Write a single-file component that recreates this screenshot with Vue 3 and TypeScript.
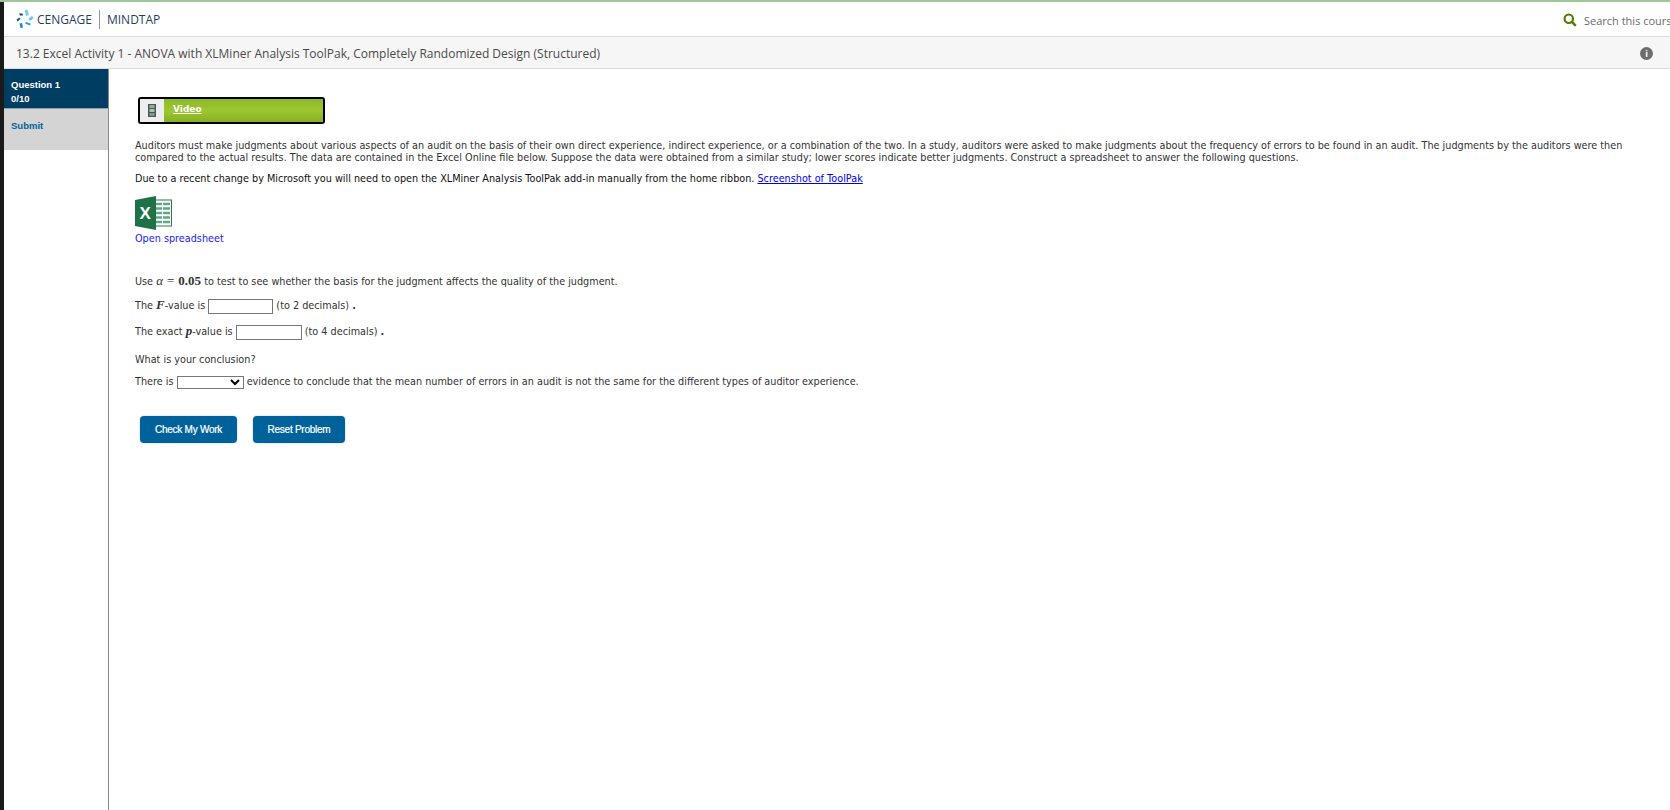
<script setup lang="ts">
import { ref } from 'vue';

const fValue = ref('');
const pValue = ref('');
const evidence = ref('');
</script>

<template>
  <div class="page">
    <div class="strip"></div>
    <div class="shell">
      <header class="top">
        <svg class="logo" width="18" height="20" viewBox="0 0 18 20">
          <path d="M8.500 1.500l3-1 1.500 5.500-3 1z" fill="#7fcdf0" />
          <path d="M12.500 9.500l3.500-2.500 1.500 2-3.500 3z" fill="#6cc3ec" />
          <path d="M9 14.500l1-1.500 4.500 1.500-.5 2z" fill="#2a9fdc" />
          <path d="M3.500 14.500l2.500-.5 1 4.500-2.500.5z" fill="#1c87c9" />
          <path d="M.5 10.500l3-2 1 1.500-3 2.500z" fill="#0f5f93" />
          <path d="M3 4.500l3.500 0 .5 2-3 0z" fill="#0d4a70" />
        </svg>
        <span class="brand">CENGAGE</span>
        <span class="brand-sep"></span>
        <span class="brand">MINDTAP</span>
        <div class="search">
          <svg width="14" height="14" viewBox="0 0 16 16">
            <circle cx="6.600" cy="6.600" r="4.800" fill="none" stroke="#4f7a00" stroke-width="2.400" />
            <path d="M10.200 10.200l4.400 4.400" stroke="#4f7a00" stroke-width="2.800" />
          </svg>
          <span>Search this course</span>
        </div>
      </header>

      <div class="title-bar">
        <span>13.2 Excel Activity 1 - ANOVA with XLMiner Analysis ToolPak, Completely Randomized Design (Structured)</span>
        <span class="info">i</span>
      </div>

      <div class="main">
        <aside class="side">
          <div class="question">Question 1<br />0/10</div>
          <div class="submit">Submit</div>
        </aside>

        <section class="content">
          <a class="video">
            <span class="video-icon">
              <svg width="8" height="13" viewBox="0 0 8 13">
                <rect width="8" height="13" fill="#4a5a50" />
                <rect x="1.500" y="1" width="5" height="3" fill="#8fb09c" />
                <rect x="1.500" y="5" width="5" height="3" fill="#a9c4b4" />
                <rect x="1.500" y="9" width="5" height="3" fill="#7d9a8a" />
              </svg>
            </span>
            <span class="video-label"><u>Video</u></span>
          </a>

          <p class="intro">
            Auditors must make judgments about various aspects of an audit on the basis of their own direct experience, indirect experience, or a combination of the two. In a study, auditors were asked to make judgments about the frequency of errors to be found in an audit. The judgments by the auditors were then compared to the actual results. The data are contained in the Excel Online file below. Suppose the data were obtained from a similar study; lower scores indicate better judgments. Construct a spreadsheet to answer the following questions.
          </p>
          <p class="notice">
            Due to a recent change by Microsoft you will need to open the XLMiner Analysis ToolPak add-in manually from the home ribbon.
            <a class="link"><u>Screenshot of ToolPak</u></a>
          </p>

          <svg class="excel" width="37" height="34" viewBox="0 0 37 34">
            <rect x="18" y="4" width="18.500" height="26" fill="#fff" stroke="#2a7d52" stroke-width="1" />
            <path d="M21 8h14M21 12.500h14M21 17h14M21 21.500h14M21 26h14" stroke="#5fa883" stroke-width="2.400" />
            <path d="M27.500 5v24" stroke="#fff" stroke-width="1" />
            <path d="M0 4L21 0v34L0 30z" fill="#1f7246" />
            <text x="4.500" y="23" class="excel-x">X</text>
          </svg>
          <a class="open">Open spreadsheet</a>

          <p class="use">
            Use <span class="math"><i>α</i><span class="eq">=</span><b>0.05</b></span> to test to see whether the basis for the judgment affects the quality of the judgment.
          </p>
          <p class="answer">
            The <span class="math"><i><b>F</b></i></span>-value is
            <input v-model="fValue" class="f-input" type="text" />
            (to 2 decimals) <b>.</b>
          </p>
          <p class="answer exact">
            The exact <span class="math"><i><b>p</b></i></span>-value is
            <input v-model="pValue" class="p-input" type="text" />
            (to 4 decimals) <b>.</b>
          </p>
          <p class="conclusion">What is your conclusion?</p>
          <p class="there">
            There is
            <select v-model="evidence" class="pick">
              <option value=""></option>
              <option value="sufficient">sufficient</option>
              <option value="insufficient">insufficient</option>
            </select>
            evidence to conclude that the mean number of errors in an audit is not the same for the different types of auditor experience.
          </p>

          <div class="actions">
            <button type="button">Check My Work</button>
            <button type="button" class="reset">Reset Problem</button>
          </div>
        </section>
      </div>
    </div>
  </div>
</template>

<style>
html,
body {
  margin: 0;
  overflow: hidden;
}
</style>

<style scoped>
.page {
  display: flex;
  width: 1670px;
  height: 810px;
  overflow: hidden;
  background: #fff;
  border-top: 2px solid #9fc79a;
  box-sizing: border-box;
}
.strip {
  width: 4px;
  flex: none;
  background: #1a1a1a;
}
.shell {
  flex: 1;
  min-width: 0;
  display: flex;
  flex-direction: column;
}
.top {
  height: 34px;
  flex: none;
  display: flex;
  align-items: center;
  padding-left: 12px;
  box-sizing: border-box;
  font-family: "Open Sans", sans-serif;
}
.logo {
  margin-right: 3px;
}
.brand {
  font-size: 12px;
  color: #1f3f5c;
}
.brand-sep {
  width: 1px;
  height: 19px;
  margin: 0 7px;
  background: #7f9bb0;
}
.search {
  margin-left: auto;
  width: 107px;
  flex: none;
  display: flex;
  align-items: center;
  gap: 7px;
  padding-top: 2px;
  overflow: hidden;
  white-space: nowrap;
  font-size: 11px;
  color: #6b6b6b;
}
.search svg {
  flex: none;
}
.title-bar {
  height: 33px;
  flex: none;
  display: flex;
  align-items: center;
  justify-content: space-between;
  padding: 1px 17px 0 12px;
  box-sizing: border-box;
  background: #f6f6f6;
  border-top: 1px solid #dcdcdc;
  border-bottom: 1px solid #dcdcdc;
  font-family: "Open Sans", sans-serif;
  font-size: 12px;
  color: #4a4a4a;
}
.info {
  width: 13px;
  height: 13px;
  border-radius: 50%;
  background: #6d6d6d;
  color: #fff;
  font-size: 9px;
  font-weight: 700;
  line-height: 13px;
  text-align: center;
}
.main {
  flex: 1;
  display: flex;
  min-height: 0;
}
.side {
  width: 105px;
  flex: none;
  border-right: 1px solid #8a8a8a;
  box-sizing: border-box;
  font-family: "Liberation Sans", sans-serif;
  font-size: 9.500px;
  font-weight: 700;
}
.question {
  height: 40px;
  padding: 9px 0 0 7px;
  box-sizing: border-box;
  background: #003d63;
  color: #fff;
  line-height: 14px;
  border-bottom: 1px solid #8fa0ac;
}
.submit {
  height: 41px;
  padding: 10px 0 0 7px;
  box-sizing: border-box;
  background: #d4d4d4;
  color: #00629b;
  line-height: 14px;
}
.content {
  flex: 1;
  min-width: 0;
  padding: 28px 30px 0 26px;
  font-family: "DejaVu Sans", Verdana, sans-serif;
  font-size: 9.680px;
  line-height: 12px;
  color: #333;
}
p {
  margin: 0;
}
.video {
  display: flex;
  width: 187px;
  height: 27px;
  margin-left: 3px;
  border: 2px solid #000;
  border-radius: 3px;
  box-sizing: border-box;
  overflow: hidden;
}
.video-icon {
  width: 24px;
  display: flex;
  align-items: center;
  justify-content: center;
  background: #eeeeee;
}
.video-label {
  flex: 1;
  padding-left: 9px;
  background: linear-gradient(#8db82a, #9cc72e 50%, #86b025);
  color: #fff;
  font-size: 9px;
  font-weight: 700;
  line-height: 21px;
}
.intro {
  margin-top: 16px;
}
.notice {
  margin-top: 9px;
  color: #111;
}
.link {
  color: #0000ee;
}
.excel {
  display: block;
  margin-top: 11px;
}
.excel-x {
  font-family: "Liberation Sans", sans-serif;
  font-size: 17px;
  font-weight: 700;
  fill: #fff;
}
.open {
  display: block;
  margin-top: 3px;
  color: #1a1aff;
}
.use {
  margin-top: 29px;
}
.math {
  font-family: "Liberation Serif", serif;
  font-size: 13px;
  line-height: 1;
}
.eq {
  margin: 0 4px;
}
.answer {
  margin-top: 10px;
  height: 15px;
  line-height: 15px;
}
.exact {
  margin-top: 11px;
}
input {
  height: 15px;
  padding: 0;
  border: 1px solid #767676;
  box-sizing: border-box;
  background: #fff;
  vertical-align: middle;
}
.f-input {
  width: 65px;
}
.p-input {
  width: 66px;
}
.conclusion {
  margin-top: 15px;
}
.there {
  margin-top: 9px;
  height: 13px;
  line-height: 13px;
}
.pick {
  width: 67px;
  height: 13px;
  padding: 0;
  border: 1px solid #767676;
  background: #fff;
  font-size: 9px;
  vertical-align: middle;
}
.actions {
  display: flex;
  gap: 16px;
  margin: 28px 0 0 5px;
}
button {
  width: 97px;
  height: 27px;
  border: none;
  border-radius: 4px;
  background: #00629b;
  color: #fff;
  font-family: "Liberation Sans", sans-serif;
  font-size: 10px;
  letter-spacing: -0.25px;
  -webkit-text-stroke: 0.2px #fff;
  box-shadow: 0 0 2px #a9c7db;
}
.reset {
  width: 92px;
}
</style>
